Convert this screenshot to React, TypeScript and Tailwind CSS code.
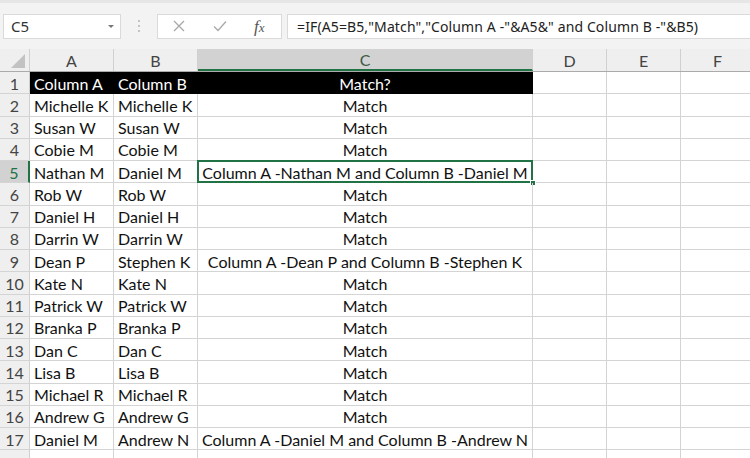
import React from "react";

const data: [string, string, string][] = [
  ["Michelle K", "Michelle K", "Match"],
  ["Susan W", "Susan W", "Match"],
  ["Cobie M", "Cobie M", "Match"],
  ["Nathan M", "Daniel M", "Column A -Nathan M and Column B -Daniel M"],
  ["Rob W", "Rob W", "Match"],
  ["Daniel H", "Daniel H", "Match"],
  ["Darrin W", "Darrin W", "Match"],
  ["Dean P", "Stephen K", "Column A -Dean P and Column B -Stephen K"],
  ["Kate N", "Kate N", "Match"],
  ["Patrick W", "Patrick W", "Match"],
  ["Branka P", "Branka P", "Match"],
  ["Dan C", "Dan C", "Match"],
  ["Lisa B", "Lisa B", "Match"],
  ["Michael R", "Michael R", "Match"],
  ["Andrew G", "Andrew G", "Match"],
  ["Daniel M", "Andrew N", "Column A -Daniel M and Column B -Andrew N"],
];

const cellFont = { fontFamily: "Lato, 'Noto Sans', sans-serif" };

function Toolbar() {
  return (
    <div className="h-[49px] bg-[#f3f3f3] border-t-[3px] border-[#e6e6e6] flex items-center" style={{ fontFamily: "'Noto Sans', 'Open Sans', sans-serif" }}>
      <div className="ml-[3px] w-[118px] h-[25px] bg-white border border-[#dadada] flex items-center justify-between pl-[7px] pr-[6px]">
        <span className="text-[15px] text-[#333]">C5</span>
        <span className="w-0 h-0 border-l-[3px] border-r-[3px] border-t-[3px] border-l-transparent border-r-transparent border-t-[#777]" />
      </div>
      <div className="w-[36px] flex flex-col items-center gap-[3px]">
        <span className="w-[2px] h-[2px] bg-[#b5b5b5] rounded-full" />
        <span className="w-[2px] h-[2px] bg-[#b5b5b5] rounded-full" />
        <span className="w-[2px] h-[2px] bg-[#b5b5b5] rounded-full" />
      </div>
      <div className="w-[125px] h-[25px] bg-white border border-[#dadada] flex items-center">
        <svg width="14" height="14" viewBox="0 0 14 14" className="ml-[14px]">
          <path d="M2 2 L12 12 M12 2 L2 12" stroke="#a8a8a8" strokeWidth="1.3" fill="none" />
        </svg>
        <svg width="16" height="14" viewBox="0 0 16 14" className="ml-[26px]">
          <path d="M2 7.5 L6 11.5 L14 2.5" stroke="#a8a8a8" strokeWidth="1.3" fill="none" />
        </svg>
        <span className="ml-[26px] text-[17px] text-[#555] italic leading-none" style={{ fontFamily: "'Liberation Serif', 'DejaVu Serif', serif" }}>
          f<span className="text-[13px]">x</span>
        </span>
      </div>
      <div className="ml-[5px] flex-1 h-[25px] bg-white border border-[#dadada] border-r-0 flex items-center pl-[9px]">
        <span className="text-[14px] text-[#222] whitespace-nowrap tracking-[0.12px]">=IF(A5=B5,"Match","Column A -"&amp;A5&amp;" and Column B -"&amp;B5)</span>
      </div>
    </div>
  );
}

const colW = ["w-[84px]", "w-[84px]", "w-[335px]", "w-[74px]", "w-[74px]", "w-[74px]"];

function ColHeader() {
  const letters = ["A", "B", "C", "D", "E", "F"];
  return (
    <div className="flex h-[23px] bg-[#efefef] border-b border-[#ababab]" style={cellFont}>
      <div className="w-[30px] shrink-0 border-r border-[#d0d0d0] relative">
        <svg width="14" height="14" viewBox="0 0 14 14" className="absolute right-[4px] bottom-[3px]">
          <path d="M14 0 L14 14 L0 14 Z" fill="#c2c2c2" />
        </svg>
      </div>
      {letters.map((l, i) => (
        <div
          key={l}
          className={`${colW[i]} shrink-0 flex items-center justify-center pt-[1px] text-[16px] border-r border-[#d0d0d0] ${
            l === "C" ? "bg-[#d2d2d2] text-[#3a5a46] border-b-2 border-b-[#217346]" : "text-[#444]"
          }`}
        >
          {l}
        </div>
      ))}
    </div>
  );
}

function Row({ n, cells, header, selected, hideNum }: { n: number; cells: string[]; header?: boolean; selected?: boolean; hideNum?: boolean }) {
  return (
    <div className="flex h-[22.25px] text-[16px] leading-none" style={cellFont}>
      <div
        className={`w-[30px] shrink-0 flex items-center justify-center pt-[2px] border-b border-[#d4d4d4] ${
          selected ? "bg-[#d2d2d2] text-[#217346] border-r-2 border-r-[#217346]" : "bg-[#efefef] text-[#444] border-r border-r-[#d0d0d0]"
        }`}
      >
        {hideNum ? "" : n}
      </div>
      <div className={`${colW[0]} shrink-0 flex items-center pt-[2px] pl-[4px] whitespace-nowrap border-r border-b ${header ? "bg-black text-white border-black" : "text-[#111] border-[#d4d4d4]"}`}>
        {cells[0]}
      </div>
      <div className={`${colW[1]} shrink-0 flex items-center pt-[2px] pl-[4px] whitespace-nowrap border-r border-b ${header ? "bg-black text-white border-black" : "text-[#111] border-[#d4d4d4]"}`}>
        {cells[1]}
      </div>
      <div className={`${colW[2]} shrink-0 relative flex items-center justify-center pt-[2px] whitespace-nowrap border-r border-b ${header ? "bg-black text-white border-black" : "text-[#111] border-[#d4d4d4]"}`}>
        {cells[2]}
        {selected && (
          <>
            <div className="absolute left-[-1px] top-[-1px] right-[-1px] bottom-[-1px] border-2 border-[#217346]" />
            <div className="absolute right-[-4px] bottom-[-4px] w-[6px] h-[6px] bg-[#217346] border border-white" />
          </>
        )}
      </div>
      <div className={`${colW[3]} shrink-0 border-r border-b border-[#d4d4d4]`} />
      <div className={`${colW[4]} shrink-0 border-r border-b border-[#d4d4d4]`} />
      <div className={`${colW[5]} shrink-0 border-r border-b border-[#d4d4d4]`} />
    </div>
  );
}

export default function App() {
  return (
    <div className="w-[750px] h-[458px] overflow-hidden bg-white">
      <Toolbar />
      <ColHeader />
      <Row n={1} cells={["Column A", "Column B", "Match?"]} header />
      {data.map((r, i) => (
        <Row key={i} n={i + 2} cells={r} selected={i + 2 === 5} />
      ))}
      <Row n={18} cells={["", "", ""]} hideNum />
    </div>
  );
}
